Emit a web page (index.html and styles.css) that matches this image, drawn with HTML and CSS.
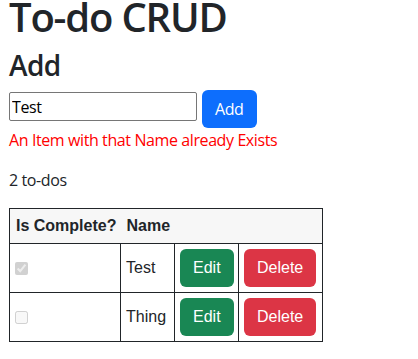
FILE: index.html
```html
<!DOCTYPE html>
<html lang="en">
<head>
    <meta charset="UTF-8">
    <meta name="viewport" content="width=device-width, initial-scale=1.0">
    <title>To-do CRUD</title>
    <link rel="stylesheet" href="styles.css">
</head>
<body>
    <!-- Page Title -->
    <h1 class="page-title">To-do CRUD</h1>
    <h3 class="section-title">Add</h3>
    <!-- Add Form -->
    <form class="add-form" onsubmit="return false;">
        <input type="text" class="add-input" value="Test">
        <button type="submit" class="btn btn-primary">Add</button>
    </form>
    <p class="error-text">An Item with that Name already Exists</p>
    <p class="counter">2 to-dos</p>
    <!-- To-do Table -->
    <table class="todo-table">
        <colgroup>
            <col class="col-complete">
            <col class="col-name">
            <col class="col-edit">
            <col class="col-delete">
        </colgroup>
        <thead>
            <tr>
                <th>Is Complete?</th>
                <th>Name</th>
                <th></th>
                <th></th>
            </tr>
        </thead>
        <tbody>
            <tr>
                <td><input type="checkbox" checked disabled></td>
                <td>Test</td>
                <td><button class="btn btn-success">Edit</button></td>
                <td><button class="btn btn-danger">Delete</button></td>
            </tr>
            <tr>
                <td><input type="checkbox" disabled></td>
                <td>Thing</td>
                <td><button class="btn btn-success">Edit</button></td>
                <td><button class="btn btn-danger">Delete</button></td>
            </tr>
        </tbody>
    </table>
</body>
</html>
```

FILE: styles.css
```css
/* Global Styling */
body {
    margin: 0;
    padding: 0 9px;
    font-family: "Open Sans", "Noto Sans", sans-serif;
    font-size: 16px;
    line-height: 1.5;
    letter-spacing: -0.4px;
    color: #212529;
    background-color: #ffffff;
}
/* Headings */
.page-title {
    font-size: 40px;
    font-weight: 600;
    line-height: 33px;
    letter-spacing: -1.2px;
    margin: 0;
}
.section-title {
    font-size: 28px;
    font-weight: 600;
    line-height: 34px;
    letter-spacing: -0.6px;
    margin: 15px 0 8px;
}
/* Add Form */
.add-form {
    display: flex;
    align-items: flex-start;
    gap: 5px;
}
.add-input {
    width: 188px;
    height: 29px;
    margin-top: 2px;
    box-sizing: border-box;
    border: 1px solid #767676;
    border-radius: 2px;
    padding: 1px 2px;
    font-family: "Open Sans", sans-serif;
    font-size: 16px;
    letter-spacing: -0.4px;
    color: #000000;
}
.error-text {
    color: #ff0000;
    margin: 0 0 16px;
}
.counter {
    margin: 0 0 16px;
}
/* Buttons */
.btn {
    display: inline-block;
    padding: 6px 12px;
    border: 1px solid transparent;
    border-radius: 6px;
    font-family: inherit;
    font-size: 16px;
    line-height: 24px;
    letter-spacing: inherit;
    color: #ffffff;
    cursor: pointer;
}
.btn-primary {
    background-color: #0d6efd;
}
.btn-success {
    background-color: #198754;
}
.btn-danger {
    background-color: #dc3545;
}
/* Table */
.todo-table {
    width: 313px;
    table-layout: fixed;
    border-collapse: collapse;
    border: 1px solid #212529;
    font-family: "Liberation Sans", Arial, sans-serif;
    font-size: 16px;
    letter-spacing: 0;
}
.col-complete {
    width: 111px;
}
.col-name {
    width: 54px;
}
.col-edit {
    width: 64px;
}
.col-delete {
    width: 84px;
}
.todo-table th {
    background-color: #f7f7f7;
    text-align: left;
    font-weight: bold;
    white-space: nowrap;
    padding: 7px 6px 8px 6px;
    border-bottom: 1px solid #212529;
    line-height: 19px;
}
.todo-table td {
    border: 1px solid #212529;
    padding: 5px 4px 5px 5px;
    height: 38px;
}
.todo-table td .btn {
    font-family: "Liberation Sans", Arial, sans-serif;
    letter-spacing: 0;
}
.todo-table input[type="checkbox"] {
    margin: 0;
    width: 13px;
    height: 13px;
    vertical-align: middle;
}
```
